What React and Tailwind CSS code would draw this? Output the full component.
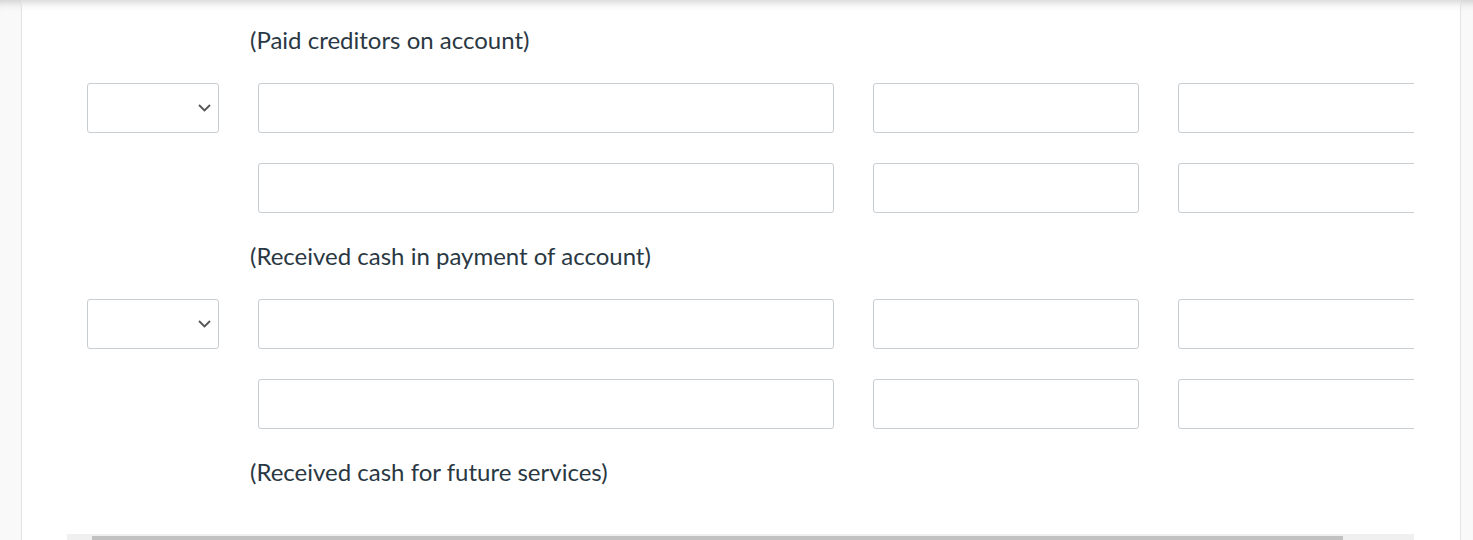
import React from "react";

const rows = [
  { label: "(Paid creditors on account)" },
  { label: "(Received cash in payment of account)" },
  { label: "(Received cash for future services)" },
];

const topShade = "shadow-[inset_0_10px_10px_-8px_rgba(0,0,0,0.2)]";

const Chevron = () => (
  <svg width="13" height="8" viewBox="0 0 13 8" fill="none">
    <path d="M1 1l5.5 5.5L12 1" stroke="#555" strokeWidth="1.8" />
  </svg>
);

const Select = () => (
  <div className="w-[132px] h-[50px] shrink-0 border border-[#c7cdd1] rounded-[3px] bg-white flex items-center justify-end pr-[7px]">
    <Chevron />
  </div>
);

const Field = ({ w }) => (
  <div className={`${w} h-[50px] shrink-0 border border-[#c7cdd1] rounded-[3px] bg-white`} />
);

const EntryRow = ({ withSelect }) => (
  <div className="flex items-center gap-[39px] pl-[20px]">
    {withSelect ? <Select /> : <div className="w-[132px] shrink-0" />}
    <Field w="w-[576px]" />
    <Field w="w-[266px]" />
    <Field w="w-[266px]" />
  </div>
);

const Label = ({ text }) => (
  <div className="pl-[183px] h-[32px] pb-[2px] flex items-center text-[24px] text-[#2a3843] font-['Lato',sans-serif]">
    {text}
  </div>
);

const App = () => {
  return (
    <div className="w-[1473px] h-[540px] bg-[#f9f9f9] flex overflow-hidden font-['Lato',sans-serif]">
      <div className={`w-[22px] shrink-0 border-r border-[#e4e4e4] ${topShade}`} />
      <div className={`w-[1439px] shrink-0 bg-white border-r border-[#e4e4e4] ${topShade}`}>
        <div className="ml-[45px] w-[1347px] overflow-hidden pt-[25px]">
          <Label text={rows[0].label} />
          <div className="mt-[26px]">
            <EntryRow withSelect />
          </div>
          <div className="mt-[30px]">
            <EntryRow />
          </div>
          <div className="mt-[28px]">
            <Label text={rows[1].label} />
          </div>
          <div className="mt-[26px]">
            <EntryRow withSelect />
          </div>
          <div className="mt-[30px]">
            <EntryRow />
          </div>
          <div className="mt-[28px]">
            <Label text={rows[2].label} />
          </div>
          <div className="mt-[45px] h-[17px] bg-[#f0f0f0] pt-[2px] pl-[25px]">
            <div className="w-[1251px] h-[8px] bg-[#c1c1c1]" />
          </div>
        </div>
      </div>
      <div className={`flex-1 ${topShade}`} />
    </div>
  );
};

export default App;
